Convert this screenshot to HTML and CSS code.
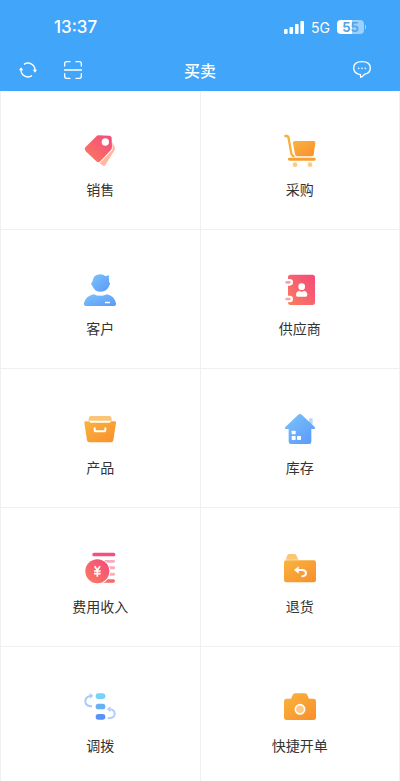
FILE: index.html
```html
<!DOCTYPE html>
<html lang="zh-CN">
<head>
    <meta charset="UTF-8">
    <meta name="viewport" content="width=device-width, initial-scale=1.0">
    <title>买卖</title>
    <link rel="stylesheet" href="styles.css">
</head>
<body>
    <!-- Shared gradients -->
    <svg class="defs" width="0" height="0" aria-hidden="true">
        <defs>
            <linearGradient id="red" x1="1" y1="0" x2="0" y2="1">
                <stop offset="0" stop-color="#f4497c"/>
                <stop offset="1" stop-color="#fb7d5f"/>
            </linearGradient>
            <linearGradient id="orange" x1="0" y1="0" x2="1" y2="1">
                <stop offset="0" stop-color="#f9b43e"/>
                <stop offset="1" stop-color="#f98e2c"/>
            </linearGradient>
            <linearGradient id="blue" x1="0" y1="0" x2="1" y2="1">
                <stop offset="0" stop-color="#7cc4fb"/>
                <stop offset="1" stop-color="#5a97fa"/>
            </linearGradient>
        </defs>
    </svg>

    <div class="app">
        <header class="header">
            <div class="status-bar">
                <span class="time">13:37</span>
                <div class="status-icons">
                    <svg width="20" height="13" viewBox="0 0 20 13" fill="#fff" aria-hidden="true">
                        <rect x="0" y="8" width="3.6" height="5" rx="1"/>
                        <rect x="5.5" y="6" width="3.6" height="7" rx="1"/>
                        <rect x="11" y="3" width="3.6" height="10" rx="1"/>
                        <rect x="16.4" y="0" width="3.6" height="13" rx="1"/>
                    </svg>
                    <span class="network">5G</span>
                    <span class="battery">55</span>
                </div>
            </div>
            <nav class="nav-bar">
                <div class="nav-left">
                    <button class="icon-btn" type="button" aria-label="刷新">
                        <svg width="18" height="18" viewBox="0 0 54 54" fill="none" stroke="#fff" stroke-width="4">
                            <path d="M15 10a21 21 0 0 1 33 17M39 44A21 21 0 0 1 6 27"/>
                            <path d="M41 26h13l-6 9zM0 28l6-9 7 9z" fill="#fff" stroke="none"/>
                        </svg>
                    </button>
                    <button class="icon-btn" type="button" aria-label="扫一扫">
                        <svg width="18" height="18" viewBox="0 0 54 54" fill="none" stroke="#fff" stroke-width="4" stroke-linecap="round">
                            <path d="M2 15V8q0-6 6-6h10M36 2h10q6 0 6 6v7M52 38v8q0 6-6 6H36M18 52H8q-6 0-6-6v-8M0 27h54"/>
                        </svg>
                    </button>
                </div>
                <h1 class="title">买卖</h1>
                <div class="nav-right">
                    <button class="icon-btn" type="button" aria-label="消息">
                        <svg width="18" height="18" viewBox="0 0 54 54" fill="none" stroke="#fff" stroke-width="4" stroke-linejoin="round">
                            <path d="M18 40C7 37 2 30 2 21 2 8 11 2 27 2s25 7 25 19c0 10-7 17-18 19-3 4-6 7-11 9l-1-9z"/>
                            <g fill="#fff" stroke="none">
                                <circle cx="17" cy="22" r="2.5"/>
                                <circle cx="27" cy="22" r="2.5"/>
                                <circle cx="37" cy="22" r="2.5"/>
                            </g>
                        </svg>
                    </button>
                </div>
            </nav>
        </header>

        <main class="menu">
            <a class="menu-item" href="#">
                <svg class="menu-icon" viewBox="0 0 96 96" aria-hidden="true">
                    <path d="M84 24l8 15q2 5 0 9L64 93q-3 5-8 1l-9-6 36-38q3-3 3-8z" fill="#fdb7a2"/>
                    <path d="M36 8q3-4 8-4l31 1q8 0 8 8l1 26q0 6-4 10L49 82q-6 6-12 0L5 52q-6-6-1-12z" fill="url(#red)"/>
                    <circle cx="64" cy="24" r="11" fill="#fff"/>
                </svg>
                <span>销售</span>
            </a>
            <a class="menu-item" href="#">
                <svg class="menu-icon" viewBox="0 0 96 96" aria-hidden="true">
                    <path d="M4 6h3q6 0 7 7l8 46q1 6 7 8" fill="none" stroke="#f9b03a" stroke-width="7" stroke-linecap="round"/>
                    <path d="M33 21h56q6 0 5 6l-5 35q-1 5-6 5H40q-6 0-7-6l-6-33q-1-7 6-7z" fill="url(#orange)"/>
                    <rect x="12" y="71" width="83" height="9" rx="4" fill="#f9a033"/>
                    <circle cx="33" cy="92" r="7" fill="#fccb86"/>
                    <circle cx="78" cy="92" r="7" fill="#fccb86"/>
                </svg>
                <span>采购</span>
            </a>
            <a class="menu-item" href="#">
                <svg class="menu-icon" viewBox="0 0 96 96" aria-hidden="true">
                    <path d="M65 10q5-4 11-2-3 4-1 10v9q6 4 1 10-6 19-26 19-19 0-25-18-7-6 0-12Q28 4 49 4q9 0 16 6z" fill="url(#blue)"/>
                    <path d="M29 64q19 9 40 0 22 5 27 27 1 8-6 8H6q-7 0-6-8 5-22 29-27z" fill="url(#blue)"/>
                    <rect x="63" y="86" width="15" height="5" rx="1" fill="#fff"/>
                </svg>
                <span>客户</span>
            </a>
            <a class="menu-item" href="#">
                <svg class="menu-icon" viewBox="0 0 96 96" aria-hidden="true">
                    <rect x="12" y="5" width="81" height="91" rx="8" fill="url(#red)"/>
                    <g fill="#fff">
                        <rect x="2" y="18" width="25" height="20" rx="10"/>
                        <rect x="2" y="68" width="25" height="20" rx="10"/>
                        <circle cx="53" cy="41" r="10"/>
                        <path d="M36 66q0-11 10-12 7 4 14 0 10 1 10 12 0 5-5 5H41q-5 0-5-5z"/>
                    </g>
                    <rect x="4" y="24" width="16" height="8" rx="4" fill="#f9a0ae"/>
                    <rect x="4" y="74" width="16" height="8" rx="4" fill="#fca59a"/>
                </svg>
                <span>供应商</span>
            </a>
            <a class="menu-item" href="#">
                <svg class="menu-icon" viewBox="0 0 96 96" aria-hidden="true">
                    <path d="M20 12h57q4 0 5 5l2 9H13l2-9q1-5 5-5z" fill="#fcc477"/>
                    <path d="M4 28h11l5 4h57l5-4h11q4 0 3 5l-8 52q-1 6-7 6H16q-6 0-7-6L1 33q-1-5 3-5z" fill="url(#orange)"/>
                    <path d="M32 49v4q0 5 5 5h22q5 0 5-5v-4" fill="none" stroke="#fff" stroke-width="6" stroke-linecap="round"/>
                </svg>
                <span>产品</span>
            </a>
            <a class="menu-item" href="#">
                <svg class="menu-icon" viewBox="0 0 96 96" aria-hidden="true">
                    <rect x="75" y="19" width="11" height="20" rx="2" fill="#b5dafd"/>
                    <path d="M42 9q6-6 12 0l38 36q4 5-2 6h-8v38q0 7-7 7H21q-7 0-7-7V51H6q-6-1-2-6z" fill="url(#blue)"/>
                    <g fill="#fff">
                        <rect x="23" y="56" width="12" height="11" rx="2"/>
                        <rect x="23" y="72" width="12" height="12" rx="2"/>
                        <rect x="39" y="72" width="12" height="12" rx="2"/>
                    </g>
                </svg>
                <span>库存</span>
            </a>
            <a class="menu-item" href="#">
                <svg class="menu-icon" viewBox="0 0 96 96" aria-hidden="true">
                    <rect x="25" y="5" width="69" height="11" rx="5" fill="#f4527c"/>
                    <rect x="60" y="27" width="33" height="8" rx="4" fill="#f9aabd"/>
                    <rect x="60" y="46" width="33" height="9" rx="4" fill="#f9aabd"/>
                    <rect x="60" y="65" width="33" height="9" rx="4" fill="#fbb0ad"/>
                    <rect x="50" y="85" width="43" height="10" rx="5" fill="#f8696b"/>
                    <circle cx="40" cy="61" r="39" fill="#fff"/>
                    <circle cx="40" cy="61" r="36" fill="url(#red)"/>
                    <path d="M32 46l8 12 8-12M40 58v19M30 60h20M30 68h20" fill="none" stroke="#fff" stroke-width="5"/>
                </svg>
                <span>费用收入</span>
            </a>
            <a class="menu-item" href="#">
                <svg class="menu-icon" viewBox="0 0 96 96" aria-hidden="true">
                    <path d="M15 9h16q4 0 6 4l6 13H5l5-13q1-4 5-4z" fill="#fcc477"/>
                    <path d="M6 28h84q6 0 6 6v53q0 7-7 7H7q-7 0-7-7V34q0-6 6-6z" fill="url(#orange)"/>
                    <path d="M38 57h18q10 1 10 10 0 8-11 9" fill="none" stroke="#fff" stroke-width="6" stroke-linecap="round"/>
                    <path d="M30 57l14-11v22z" fill="#fff"/>
                </svg>
                <span>退货</span>
            </a>
            <a class="menu-item" href="#">
                <svg class="menu-icon" viewBox="0 0 96 96" aria-hidden="true">
                    <rect x="35" y="10" width="29" height="17" rx="8" fill="#76d2f8"/>
                    <rect x="35" y="41" width="29" height="17" rx="8" fill="#67b0f5"/>
                    <rect x="35" y="72" width="29" height="17" rx="8" fill="#5b92fa"/>
                    <path d="M24 49Q4 49 4 34q0-13 15-16" fill="none" stroke="#a5cdf6" stroke-width="6"/>
                    <path d="M17 9l11 8-10 9z" fill="#a5cdf6"/>
                    <path d="M71 85q21 0 21-13 0-12-13-14" fill="none" stroke="#b2cefb" stroke-width="6"/>
                    <path d="M80 49L69 57l10 10z" fill="#b2cefb"/>
                </svg>
                <span>调拨</span>
            </a>
            <a class="menu-item" href="#">
                <svg class="menu-icon" viewBox="0 0 96 96" aria-hidden="true">
                    <path d="M33 10h30q5 0 7 5l5 11h13q8 0 8 8v48q0 8-8 8H8q-8 0-8-8V34q0-8 8-8h13l5-11q2-5 7-5z" fill="url(#orange)"/>
                    <circle cx="48" cy="58" r="14" fill="#fcc986" stroke="#fff" stroke-width="5"/>
                </svg>
                <span>快捷开单</span>
            </a>
        </main>
    </div>
</body>
</html>
```
FILE: styles.css
```css
:root {
    --primary-color: #41a5fa;
    --border-color: #f0f0f0;
    --text-color: #333333;
}

* {
    box-sizing: border-box;
}

body {
    font-family: "Noto Sans CJK SC", sans-serif;
    margin: 0;
    background-color: #ffffff;
    color: var(--text-color);
}

.defs {
    position: absolute;
}

.app {
    display: flex;
    flex-direction: column;
    height: 100vh;
}

/* Header */
.header {
    flex: none;
    background: var(--primary-color);
    color: #ffffff;
}

.status-bar {
    display: flex;
    align-items: center;
    justify-content: space-between;
    height: 50px;
    padding: 4px 36px 0 54px;
    font-family: Inter, sans-serif;
}

.time {
    font-size: 17px;
    font-weight: 500;
}

.status-icons {
    display: flex;
    align-items: center;
    gap: 7px;
}

.network {
    font-size: 14px;
}

.battery {
    position: relative;
    width: 27px;
    height: 14px;
    border-radius: 4px;
    background: linear-gradient(to right, #ffffff 55%, #9bd1fc 55%);
    color: #55a5e6;
    font-size: 13px;
    font-weight: 700;
    line-height: 14px;
    text-align: center;
}

.battery::after {
    content: "";
    position: absolute;
    top: 5px;
    right: -2px;
    width: 1px;
    height: 4px;
    background: #9bd1fc;
}

.nav-bar {
    display: grid;
    grid-template-columns: 1fr auto 1fr;
    align-items: center;
    height: 41px;
    padding: 0 29px 2px 19px;
}

.nav-left {
    display: flex;
    gap: 27px;
}

.nav-right {
    display: flex;
    justify-content: flex-end;
}

.nav-bar .title {
    margin: 0;
    padding-left: 10px;
    font-size: 16px;
    font-weight: 500;
    line-height: 24px;
}

.icon-btn {
    display: flex;
    padding: 0;
    border: none;
    background: none;
    cursor: pointer;
}

/* Menu grid */
.menu {
    display: grid;
    grid-template-columns: 1fr 1fr;
    grid-auto-rows: 139px;
    flex: 1;
    overflow-y: auto;
    scrollbar-width: none;
    border-left: 1px solid var(--border-color);
}

.menu-item {
    display: flex;
    flex-direction: column;
    align-items: center;
    gap: 13px;
    padding-top: 43px;
    border-right: 1px solid var(--border-color);
    border-bottom: 1px solid var(--border-color);
    color: var(--text-color);
    font-size: 14px;
    line-height: 20px;
    text-decoration: none;
}

.menu-icon {
    width: 32px;
    height: 32px;
    overflow: visible;
}
```
